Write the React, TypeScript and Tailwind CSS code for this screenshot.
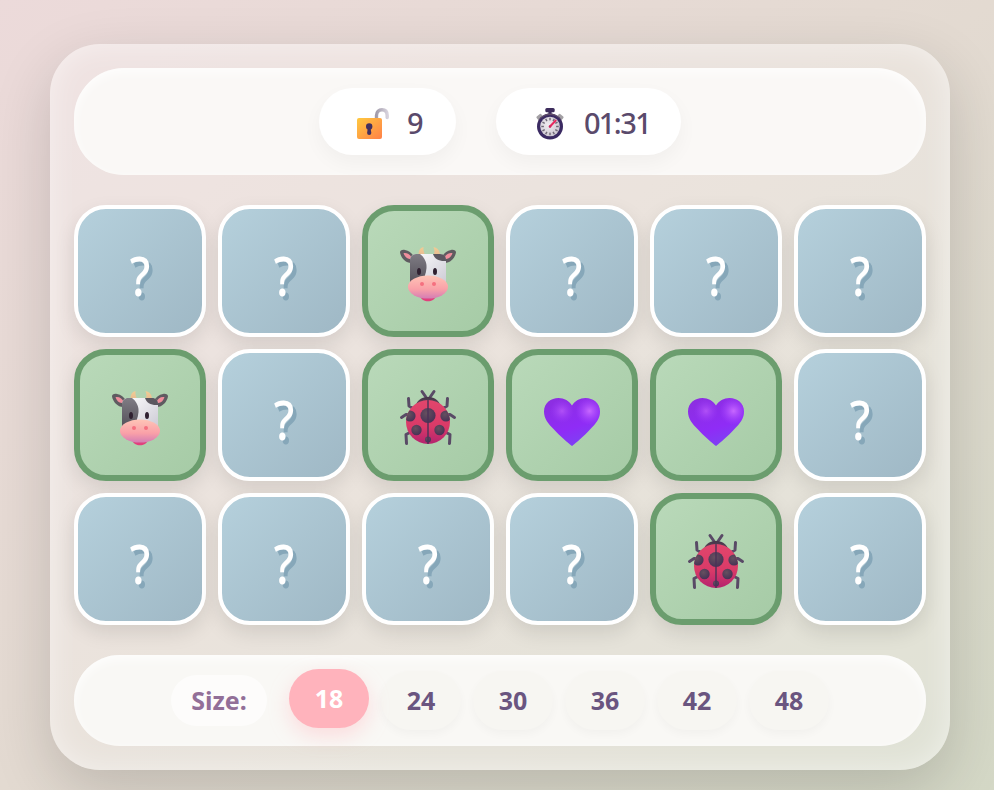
import React from "react";

const font = { fontFamily: '"Noto Sans", "Open Sans", sans-serif' };
const heartPath =
  "M28 63 C24 60 16 53 10 46.5 C4 40.5 0 35.5 0 28.5 C0 20 7 15 14.5 15 C20 15 25.5 18 28 22.5 C30.5 18 36 15 41.5 15 C49 15 56 20 56 28.5 C56 35.5 52 40.5 46 46.5 C40 53 32 60 28 63 Z";

function Defs() {
  return (
    <svg width="0" height="0" className="absolute">
      <defs>
        <linearGradient id="lockBody" x1="0" y1="0" x2="1" y2="1">
          <stop offset="0" stopColor="#ffc93f" />
          <stop offset="1" stopColor="#ff8048" />
        </linearGradient>
        <linearGradient id="shackle" x1="0" y1="0" x2="1" y2="0">
          <stop offset="0" stopColor="#a29cab" />
          <stop offset="1" stopColor="#d6d1dc" />
        </linearGradient>
        <radialGradient id="watchFace" cx="0.4" cy="0.4" r="0.7">
          <stop offset="0" stopColor="#f0ecf0" />
          <stop offset="1" stopColor="#c9c3ce" />
        </radialGradient>
        <linearGradient id="cowHead" x1="0" y1="0" x2="1" y2="1">
          <stop offset="0" stopColor="#ffffff" />
          <stop offset="1" stopColor="#c9c7d2" />
        </linearGradient>
        <linearGradient id="cowPatch" x1="0" y1="0" x2="0" y2="1">
          <stop offset="0" stopColor="#7f7c84" />
          <stop offset="1" stopColor="#55515a" />
        </linearGradient>
        <linearGradient id="cowSnout" x1="0" y1="0" x2="0" y2="1">
          <stop offset="0" stopColor="#ffc4b6" />
          <stop offset="0.6" stopColor="#f9a0a8" />
          <stop offset="1" stopColor="#d47db4" />
        </linearGradient>
        <linearGradient id="horn" x1="0" y1="0" x2="0" y2="1">
          <stop offset="0" stopColor="#f3cc94" />
          <stop offset="1" stopColor="#e6bd92" />
        </linearGradient>
        <linearGradient id="bugBody" x1="0" y1="0" x2="0" y2="1">
          <stop offset="0" stopColor="#e2466c" />
          <stop offset="0.6" stopColor="#d93a68" />
          <stop offset="1" stopColor="#b4236e" />
        </linearGradient>
        <linearGradient id="bugHead" x1="0" y1="0" x2="0" y2="1">
          <stop offset="0" stopColor="#453448" />
          <stop offset="1" stopColor="#6e5a6c" />
        </linearGradient>
        <radialGradient id="bugSpot" cx="0.4" cy="0.35" r="0.8">
          <stop offset="0" stopColor="#66505f" />
          <stop offset="1" stopColor="#412c54" />
        </radialGradient>
        <linearGradient id="heartBase" x1="0" y1="0" x2="0.4" y2="1">
          <stop offset="0" stopColor="#8c2fdc" />
          <stop offset="0.7" stopColor="#8f2cf6" />
          <stop offset="1" stopColor="#7e40f4" />
        </linearGradient>
        <radialGradient id="heartGlowR" cx="0.5" cy="0.5" r="0.5">
          <stop offset="0" stopColor="#c868ff" stopOpacity="1" />
          <stop offset="1" stopColor="#a544ff" stopOpacity="0" />
        </radialGradient>
        <clipPath id="bugClip">
          <circle cx="28" cy="39" r="22" />
        </clipPath>
        <clipPath id="heartClip">
          <path d={heartPath} />
        </clipPath>
      </defs>
    </svg>
  );
}

function Lock() {
  return (
    <svg width="32" height="32" viewBox="0 0 32 32" className="shrink-0 translate-y-0.5">
      <path d="M19.5 11 V7.5 C19.5 3.5 22 1.8 25 1.8 C28 1.8 30.2 3.5 30.2 7.5 V9.5" fill="none" stroke="url(#shackle)" strokeWidth="3.4" strokeLinecap="round" />
      <rect x="0" y="10" width="25" height="21" rx="2" fill="url(#lockBody)" />
      <circle cx="12.2" cy="18.5" r="3.2" fill="#42305f" />
      <path d="M10.9 19 h2.6 l0.8 6 a2 2 0 0 1 -4.2 0 Z" fill="#42305f" />
    </svg>
  );
}

function Watch() {
  const ticks = [0, 30, 60, 90, 120, 150, 180, 210, 240, 270, 300, 330];
  return (
    <svg width="32" height="32" viewBox="0 0 32 32" className="shrink-0 translate-y-0.5">
      <rect x="14.4" y="2" width="3.2" height="5" fill="#3d2c5c" />
      <rect x="11.3" y="0" width="9.4" height="4.2" rx="1.5" fill="#3d2c5c" />
      <rect x="2.8" y="6.6" width="6" height="4.6" rx="1" fill="#a3a0a4" transform="rotate(-40 6 9)" />
      <rect x="23.2" y="6.6" width="6" height="4.6" rx="1" fill="#a3a0a4" transform="rotate(40 26 9)" />
      <circle cx="16" cy="18.5" r="13" fill="#3a2a62" />
      <path d="M3 18.5 a13 13 0 0 1 26 0 a13 11.5 0 0 0 -26 0Z" fill="#5f4c68" />
      <circle cx="16" cy="18.5" r="9.8" fill="url(#watchFace)" />
      {ticks.map((a) => (
        <rect key={a} x="15.3" y="9.8" width="1.4" height="2.6" fill="#6f6976" transform={`rotate(${a} 16 18.5)`} />
      ))}
      <path d="M16 18.5 L21.6 12.6" stroke="#e8285e" strokeWidth="2.1" strokeLinecap="round" />
      <circle cx="16" cy="18.5" r="1.3" fill="#c92a60" />
    </svg>
  );
}

function Cow() {
  return (
    <svg width="56" height="64" viewBox="0 0 56 64" className="overflow-visible">
      <path d="M18.5 16 C18.5 11.5 20 9 23.5 8 C23 10.5 24 13.5 25 16 Z" fill="url(#horn)" />
      <path d="M33.5 8 C37.5 9 40 11.5 40 16 L33.5 16 C35 13.5 34.5 10.5 33.5 8 Z" fill="url(#horn)" />
      <path d="M0 13.5 C0 11.5 2 10.5 5 11 C9 11.5 12 14 14 18 L12 24 C6 24.5 1 19 0 13.5 Z" fill="#5f5b61" />
      <path d="M3.5 14.2 C7 13.5 10.5 15.5 12 19.5 C8 21 5 18.5 3.5 14.2 Z" fill="#f08e9c" />
      <path d="M56 13.5 C56 11.5 54 10.5 51 11 C47 11.5 44 14 42 18 L44 24 C50 24.5 55 19 56 13.5 Z" fill="#5f5b61" />
      <path d="M52.5 14.2 C49 13.5 45.5 15.5 44 19.5 C48 21 51 18.5 52.5 14.2 Z" fill="#f08e9c" />
      <rect x="10" y="15" width="36" height="34" rx="6" fill="url(#cowHead)" />
      <path d="M20 15 C24 18 27 23 26.5 29 C26 35 24 40 21 44 L10 44 L10 21 C10 17.5 13 15 16 15 Z" fill="url(#cowPatch)" />
      <path d="M33 15 C34.5 20 39 22.5 46 22 V21 C46 17.5 44 15 40 15 Z" fill="#5c5860" />
      <ellipse cx="19" cy="32.5" rx="2" ry="3.5" fill="#2f2030" />
      <ellipse cx="35" cy="32.5" rx="2" ry="3.5" fill="#2f2030" />
      <path d="M20 57 C22 64 34 64 36 57 Z" fill="#e2407c" />
      <ellipse cx="28" cy="48" rx="20" ry="11.5" fill="url(#cowSnout)" />
      <circle cx="22" cy="45" r="2" fill="#f5707f" />
      <circle cx="34" cy="45" r="2" fill="#f5707f" />
    </svg>
  );
}

function Bug() {
  const leg = { fill: "none", stroke: "#594a66", strokeWidth: 3, strokeLinecap: "round" as const, strokeLinejoin: "round" as const };
  return (
    <svg width="56" height="64" viewBox="0 0 56 64" className="overflow-visible">
      <path d="M22 8.5 L26.5 15 M34 8.5 L29.5 15" {...leg} />
      <path d="M8.5 15.5 L9 23 L14 26 M47.5 15.5 L47 23 L42 26" {...leg} />
      <path d="M1.5 34.5 L6 31.5 L12 32 M54.5 34.5 L50 31.5 L44 32" {...leg} />
      <path d="M6.5 60.5 L6 51.5 L11 49 M49.5 60.5 L50 51.5 L45 49" {...leg} />
      <path d="M15 27 C15 18 21 14 28 14 C35 14 41 18 41 27 Z" fill="url(#bugHead)" />
      <circle cx="28" cy="39" r="22" fill="url(#bugBody)" />
      <g clipPath="url(#bugClip)">
        <circle cx="28" cy="32.5" r="7.6" fill="url(#bugSpot)" />
        <circle cx="10" cy="33" r="5.6" fill="url(#bugSpot)" />
        <circle cx="46" cy="33" r="5.6" fill="url(#bugSpot)" />
        <circle cx="16.5" cy="47" r="5.2" fill="url(#bugSpot)" />
        <circle cx="39.5" cy="47" r="5.2" fill="url(#bugSpot)" />
        <circle cx="28" cy="56.5" r="3" fill="url(#bugSpot)" />
        <rect x="27.3" y="17" width="1.4" height="44" fill="#4a3258" />
      </g>
    </svg>
  );
}

function Heart() {
  return (
    <svg width="56" height="64" viewBox="0 0 56 64" className="overflow-visible">
      <g clipPath="url(#heartClip)">
        <rect x="-2" y="12" width="60" height="54" fill="url(#heartBase)" />
        <ellipse cx="45.5" cy="28" rx="14" ry="14" fill="url(#heartGlowR)" />
        <ellipse cx="18" cy="28" rx="12" ry="12" fill="url(#heartGlowR)" opacity="0.6" />
      </g>
    </svg>
  );
}

type Kind = "?" | "cow" | "bug" | "heart";

const cards: Kind[] = [
  "?", "?", "cow", "?", "?", "?",
  "cow", "?", "bug", "heart", "heart", "?",
  "?", "?", "?", "?", "bug", "?",
];

function Card({ kind }: { kind: Kind }) {
  if (kind === "?") {
    return (
      <div className="flex h-[132px] items-center justify-center rounded-[32px] border-4 border-white bg-gradient-to-br from-[#b5d0dc] to-[#9fb8c5] shadow-[0_8px_20px_rgba(0,0,0,0.1)]">
        <span className="scale-x-85 pt-2 text-[54px] font-medium leading-none text-white [text-shadow:4px_4px_0_#86a7b9]">?</span>
      </div>
    );
  }
  return (
    <div className="flex h-[132px] items-center justify-center rounded-[32px] border-[6px] border-[#6b9d6e] bg-gradient-to-br from-[#b9d9b9] to-[#a6cba6] shadow-[0_8px_20px_rgba(0,0,0,0.1)]">
      {kind === "cow" && <Cow />}
      {kind === "bug" && <Bug />}
      {kind === "heart" && <Heart />}
    </div>
  );
}

function Stat({ icon, text, pad }: { icon: React.ReactNode; text: string; pad: string }) {
  return (
    <div className={`flex h-[67px] items-center gap-[18px] rounded-[34px] bg-white shadow-[0_8px_20px_rgba(0,0,0,0.04)] ${pad}`}>
      {icon}
      <span className="translate-y-px text-[29px] font-medium leading-none tracking-[-1.6px] text-[#5a4a6b]">{text}</span>
    </div>
  );
}

const sizes = [18, 24, 30, 36, 42, 48];

export default function App() {
  return (
    <div
      className="min-h-[790px] bg-gradient-to-br from-[#ecdada] via-[#e3dad1] to-[#d4d8c6] pt-[44px] pb-[20px]"
      style={font}
    >
      <Defs />
      <div className="ml-[50px] flex h-[726px] w-[900px] flex-col gap-[30px] rounded-[50px] bg-white/25 p-6 shadow-[0_20px_60px_rgba(0,0,0,0.16),inset_0_0_30px_rgba(255,255,255,0.5)]">
        <div className="flex h-[107px] items-center justify-center gap-10 rounded-[50px] bg-[#faf8f6] shadow-[inset_0_4px_12px_rgba(255,255,255,0.8)]">
          <Stat icon={<Lock />} text="9" pad="pl-[38px] pr-[34px]" />
          <Stat icon={<Watch />} text="01:31" pad="pl-[38px] pr-[31px]" />
        </div>
        <div className="grid grid-cols-6 gap-3">
          {cards.map((k, i) => (
            <Card key={i} kind={k} />
          ))}
        </div>
        <div className="flex h-[91px] items-center justify-center gap-3 rounded-[46px] bg-[#f9f8f5] shadow-[inset_0_4px_12px_rgba(255,255,255,0.8)]">
          <div className="mr-2.5 flex h-[51px] w-[96px] items-center justify-center rounded-[26px] bg-white/60 text-[25px] font-bold text-[#926f98]">
            Size:
          </div>
          {sizes.map((s) =>
            s === 18 ? (
              <button key={s} className="h-[59px] w-[80px] -translate-y-[2px] rounded-[30px] bg-[#ffb3bc] text-[25px] font-bold text-white shadow-[0_8px_20px_rgba(255,179,188,0.4)]">
                {s}
              </button>
            ) : (
              <button key={s} className="h-[59px] w-[80px] rounded-[30px] bg-[#f7f6f2] text-[25px] font-bold text-[#6a5580] shadow-[0_4px_10px_rgba(0,0,0,0.03)]">
                {s}
              </button>
            )
          )}
        </div>
      </div>
    </div>
  );
}
